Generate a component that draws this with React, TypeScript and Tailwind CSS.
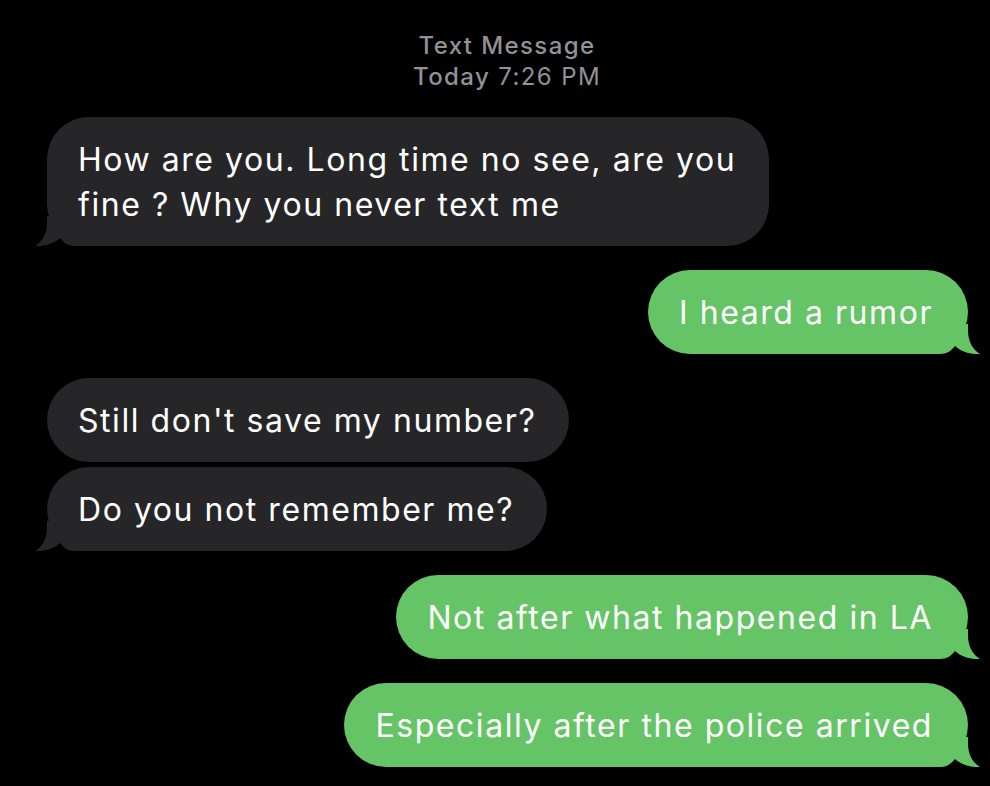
import React from 'react';

type Msg = { from: 'them' | 'me'; lines: string[]; tail: boolean; gap: string };

const messages: Msg[] = [
  { from: 'them', lines: ['How are you. Long time no see, are you', 'fine ? Why you never text me'], tail: true, gap: 'mt-0' },
  { from: 'me', lines: ['I heard a rumor'], tail: true, gap: 'mt-6' },
  { from: 'them', lines: ["Still don't save my number?"], tail: false, gap: 'mt-6' },
  { from: 'them', lines: ['Do you not remember me?'], tail: true, gap: 'mt-[5px]' },
  { from: 'me', lines: ['Not after what happened in LA'], tail: true, gap: 'mt-6' },
  { from: 'me', lines: ['Especially after the police arrived'], tail: true, gap: 'mt-6' },
];

// iMessage-style tail, drawn for the left side; mirrored for outgoing bubbles
const Tail: React.FC<{ mine: boolean; color: string }> = ({ mine, color }) => (
  <svg
    className={`absolute bottom-0 w-[56px] h-[30px] ${mine ? 'right-[-14px] scale-x-[-1]' : 'left-[-14px]'}`}
    viewBox="0 0 56 30"
    fill={color}
  >
    <path d="M14 0 L14 6 C14 17, 10 25, 2 30 C10 30.5, 20 28.5, 27 22 C31 27, 35 30, 42 30 L56 30 L56 0 Z" />
  </svg>
);

const Bubble: React.FC<{ m: Msg }> = ({ m }) => {
  const mine = m.from === 'me';
  const color = mine ? '#65c466' : '#262628';
  return (
    <div className={`flex ${mine ? 'justify-end' : 'justify-start'} ${m.gap}`}>
      <div
        className={`relative rounded-[42px] py-[19.5px] text-[32px] leading-[45px] tracking-[1.55px] text-white ${mine ? 'bg-[#65c466] pl-[31px] pr-[35px]' : 'bg-[#262628] pl-[31px] pr-[33px]'}`}
      >
        {m.tail && <Tail mine={mine} color={color} />}
        <div className="relative whitespace-nowrap">
          {m.lines.map((l, i) => (
            <div key={i}>{l}</div>
          ))}
        </div>
      </div>
    </div>
  );
};

export default function App() {
  return (
    <div
      className="w-[990px] h-[786px] bg-black overflow-hidden"
      style={{ fontFamily: 'Inter, "Noto Sans", sans-serif' }}
    >
      {/* Header */}
      <div className="pt-[30px] pl-6 text-center text-[24px] leading-[31px] text-[#919196] tracking-[1.4px]">
        <div className="font-medium">Text Message</div>
        <div>
          <span className="font-medium">Today</span> 7:26 PM
        </div>
      </div>

      {/* Thread */}
      <div className="pt-[25px] pl-[47px] pr-[22px] flex flex-col">
        {messages.map((m, i) => (
          <Bubble key={i} m={m} />
        ))}
      </div>
    </div>
  );
}
